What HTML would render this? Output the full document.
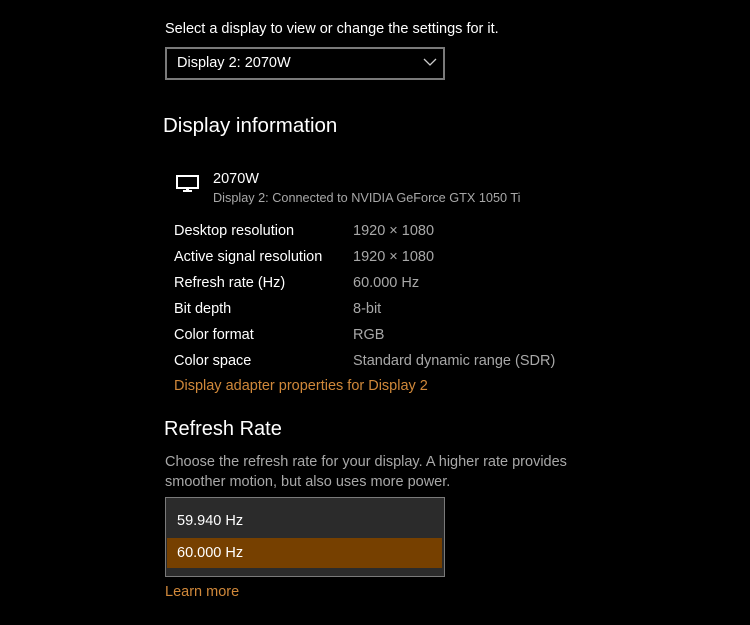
<!DOCTYPE html>
<html><head><style>
body{margin:0;width:750px;height:625px;background:#000;font-family:"Liberation Sans",sans-serif;color:#fff;position:relative;overflow:hidden}
.a{position:absolute;white-space:nowrap}
.t{font-size:14.5px}
.g{color:#a8a8a8}
.o{color:#d0883a}
</style></head><body>
<div class="a t" style="left:165px;top:21px">Select a display to view or change the settings for it.</div>
<div class="a" style="left:165px;top:47px;width:276px;height:29px;border:2px solid #7a7a7a"></div>
<div class="a t" style="left:177px;top:55px">Display 2: 2070W</div>
<svg class="a" style="left:423px;top:58px" width="14" height="9"><path d="M1 1 L7 7 L13 1" stroke="#ccc" stroke-width="1.3" fill="none"/></svg>
<div class="a" style="left:163px;top:114px;font-size:20.5px">Display information</div>
<svg class="a" style="left:176px;top:175px" width="24" height="18"><rect x="1" y="1" width="21" height="12" stroke="#fff" stroke-width="2" fill="none"/><rect x="10" y="13" width="3" height="3" fill="#fff"/><rect x="7" y="15" width="9" height="2" fill="#fff"/></svg>
<div class="a t" style="left:213px;top:171px">2070W</div>
<div class="a g" style="left:213px;top:191px;font-size:12.7px">Display 2: Connected to NVIDIA GeForce GTX 1050 Ti</div>
<div class="a t" style="left:174px;top:218px;line-height:26px">Desktop resolution<br>Active signal resolution<br>Refresh rate (Hz)<br>Bit depth<br>Color format<br>Color space</div>
<div class="a t g" style="left:353px;top:218px;line-height:26px">1920 × 1080<br>1920 × 1080<br>60.000 Hz<br>8-bit<br>RGB<br>Standard dynamic range (SDR)</div>
<div class="a t o" style="left:174px;top:378px">Display adapter properties for Display 2</div>
<div class="a" style="left:164px;top:418px;font-size:20px">Refresh Rate</div>
<div class="a t g" style="left:165px;top:452px;line-height:20px">Choose the refresh rate for your display. A higher rate provides<br>smoother motion, but also uses more power.</div>
<div class="a" style="left:165px;top:497px;width:278px;height:78px;border:1px solid #7a7a7a;background:#2b2b2b"></div>
<div class="a t" style="left:177px;top:513px">59.940 Hz</div>
<div class="a" style="left:167px;top:538px;width:275px;height:30px;background:#764000"></div>
<div class="a t" style="left:177px;top:545px">60.000 Hz</div>
<div class="a t o" style="left:165px;top:584px">Learn more</div>
</body></html>
